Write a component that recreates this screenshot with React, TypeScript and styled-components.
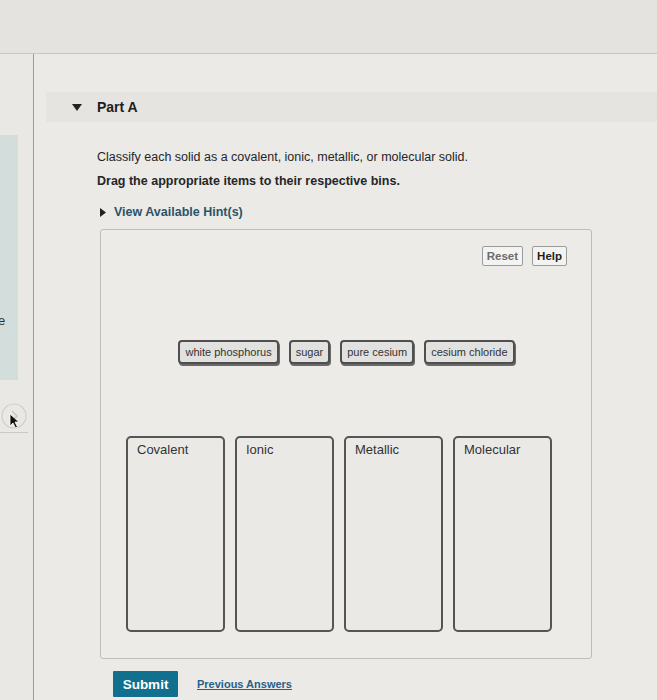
import * as React from 'react'
import styled, { createGlobalStyle } from 'styled-components'

const Global = createGlobalStyle`
  html, body {
    margin: 0;
    padding: 0;
    background: #ebeae7;
    font-family: "Liberation Sans", Arial, Helvetica, sans-serif;
    color: #2a2a2a;
  }
`

const Page = styled.div`
  width: 657px;
  height: 700px;
  overflow: hidden;
  display: flex;
  flex-direction: column;
`

const TopStrip = styled.div`
  height: 53px;
  flex: none;
  background: #e4e3e0;
  border-bottom: 1px solid #c6c6c3;
`

const Body = styled.div`
  flex: 1;
  display: flex;
`

const Sidebar = styled.div`
  width: 33px;
  flex: none;
  border-right: 1px solid #9d9d9b;
  background: #e9e8e5;
  display: flex;
  flex-direction: column;
  position: relative;
`

const SidePanel = styled.div`
  margin-top: 81px;
  width: 18px;
  height: 245px;
  background: #d3dedc;
  overflow: hidden;
  padding-top: 178px;
  box-sizing: border-box;
  font-size: 13px;
  color: #333;
  text-indent: -2px;
`

const SideNav = styled.div`
  margin-top: 20px;
  height: 32px;
  width: 28px;
  border-bottom: 1px solid #c9c9c6;
  display: flex;
  justify-content: center;
  align-items: center;
  position: relative;
`

const Cursor = styled.svg`
  position: absolute;
  left: 9px;
  top: 13px;
`

const Main = styled.div`
  flex: 1;
  display: flex;
  flex-direction: column;
  padding-top: 38px;
`

const PartHeader = styled.div`
  height: 30px;
  margin-left: 12px;
  display: flex;
  align-items: center;
  gap: 15px;
  padding-left: 26px;
  background: #e5e4e1;
  font-size: 14px;
  font-weight: bold;
  color: #1e1e1e;
`

const Content = styled.div`
  padding-left: 63px;
  padding-top: 26px;
  display: flex;
  flex-direction: column;
`

const Line = styled.div<{ $bold?: boolean; $gap?: number }>`
  font-size: 12.5px;
  line-height: 18px;
  margin-top: ${p => p.$gap ?? 0}px;
  font-weight: ${p => (p.$bold ? 'bold' : 'normal')};
  color: #262626;
`

const Hint = styled.div`
  margin-top: 13px;
  display: flex;
  align-items: center;
  gap: 8px;
  padding-left: 3px;
  font-size: 12.5px;
  line-height: 18px;
  font-weight: bold;
  color: #2b5468;
`

const Board = styled.div`
  margin-top: 8px;
  margin-left: 3px;
  width: 492px;
  box-sizing: border-box;
  border: 1px solid #bdbdba;
  border-radius: 3px;
  background: #ecebe8;
  padding: 16px 24px 26px 25px;
  display: flex;
  flex-direction: column;
`

const Tools = styled.div`
  display: flex;
  justify-content: flex-end;
  gap: 9px;
`

const ToolButton = styled.div<{ $strong?: boolean }>`
  height: 20px;
  padding: 0 4px;
  box-sizing: border-box;
  display: flex;
  align-items: center;
  border: 1px solid #9c9c9a;
  border-radius: 2px;
  background: #f3f3f1;
  font-size: 11.5px;
  font-weight: bold;
  color: ${p => (p.$strong ? '#1e1e1e' : '#6b6b6b')};
`

const Items = styled.div`
  margin-top: 74px;
  display: flex;
  justify-content: center;
  align-items: center;
  gap: 10px;
`

const Item = styled.div`
  height: 24px;
  box-sizing: border-box;
  padding: 0 5px;
  display: flex;
  align-items: center;
  border: 2px solid #4f4f4f;
  border-radius: 4px;
  background: #e1e1df;
  box-shadow: 1px 2px 0 #6a6a6a;
  font-size: 11px;
  color: #333;
`

const Bins = styled.div`
  margin-top: 72px;
  display: flex;
  gap: 10px;
`

const Bin = styled.div`
  width: 99px;
  height: 196px;
  box-sizing: border-box;
  border: 2px solid #555;
  border-radius: 5px;
  background: #eae9e6;
  padding: 4px 9px;
  font-size: 13px;
  color: #333;
`

const Actions = styled.div`
  margin-top: 12px;
  margin-left: 16px;
  display: flex;
  align-items: center;
  gap: 19px;
`

const Submit = styled.div`
  width: 65px;
  height: 26px;
  display: flex;
  align-items: center;
  justify-content: center;
  background: #10708e;
  color: #fff;
  font-size: 13.5px;
  font-weight: bold;
  border-radius: 1px;
`

const PrevLink = styled.a`
  font-size: 11px;
  font-weight: bold;
  color: #2a5f86;
  text-decoration: underline;
`

const items = ['white phosphorus', 'sugar', 'pure cesium', 'cesium chloride']
const bins = ['Covalent', 'Ionic', 'Metallic', 'Molecular']

export default function App() {
  return (
    <>
      <Global />
      <Page>
        <TopStrip />
        <Body>
          <Sidebar>
            <SidePanel>e</SidePanel>
            <SideNav>
              <svg width="26" height="26" viewBox="0 0 26 26">
                <circle cx="13" cy="13" r="12" fill="none" stroke="#cfcfcc" strokeWidth="1.2" />
                <path d="M11 8l5 5-5 5" fill="none" stroke="#c4c4c1" strokeWidth="1.3" />
              </svg>
              <Cursor width="12" height="16" viewBox="0 0 12 16">
                <path d="M1 1v12l3-3 2.5 5 2-1-2.5-5H10z" fill="#111" stroke="#fff" strokeWidth="0.8" />
              </Cursor>
            </SideNav>
          </Sidebar>
          <Main>
            <PartHeader>
              <svg width="10" height="7" viewBox="0 0 10 7">
                <path d="M0 0h10L5 7z" fill="#222" />
              </svg>
              Part A
            </PartHeader>
            <Content>
              <Line>Classify each solid as a covalent, ionic, metallic, or molecular solid.</Line>
              <Line $bold $gap={6}>Drag the appropriate items to their respective bins.</Line>
              <Hint>
                <svg width="6" height="9" viewBox="0 0 6 9">
                  <path d="M0 0l6 4.5L0 9z" fill="#222" />
                </svg>
                View Available Hint(s)
              </Hint>
              <Board>
                <Tools>
                  <ToolButton>Reset</ToolButton>
                  <ToolButton $strong>Help</ToolButton>
                </Tools>
                <Items>
                  {items.map(i => (
                    <Item key={i}>{i}</Item>
                  ))}
                </Items>
                <Bins>
                  {bins.map(b => (
                    <Bin key={b}>{b}</Bin>
                  ))}
                </Bins>
              </Board>
              <Actions>
                <Submit>Submit</Submit>
                <PrevLink>Previous Answers</PrevLink>
              </Actions>
            </Content>
          </Main>
        </Body>
      </Page>
    </>
  )
}
